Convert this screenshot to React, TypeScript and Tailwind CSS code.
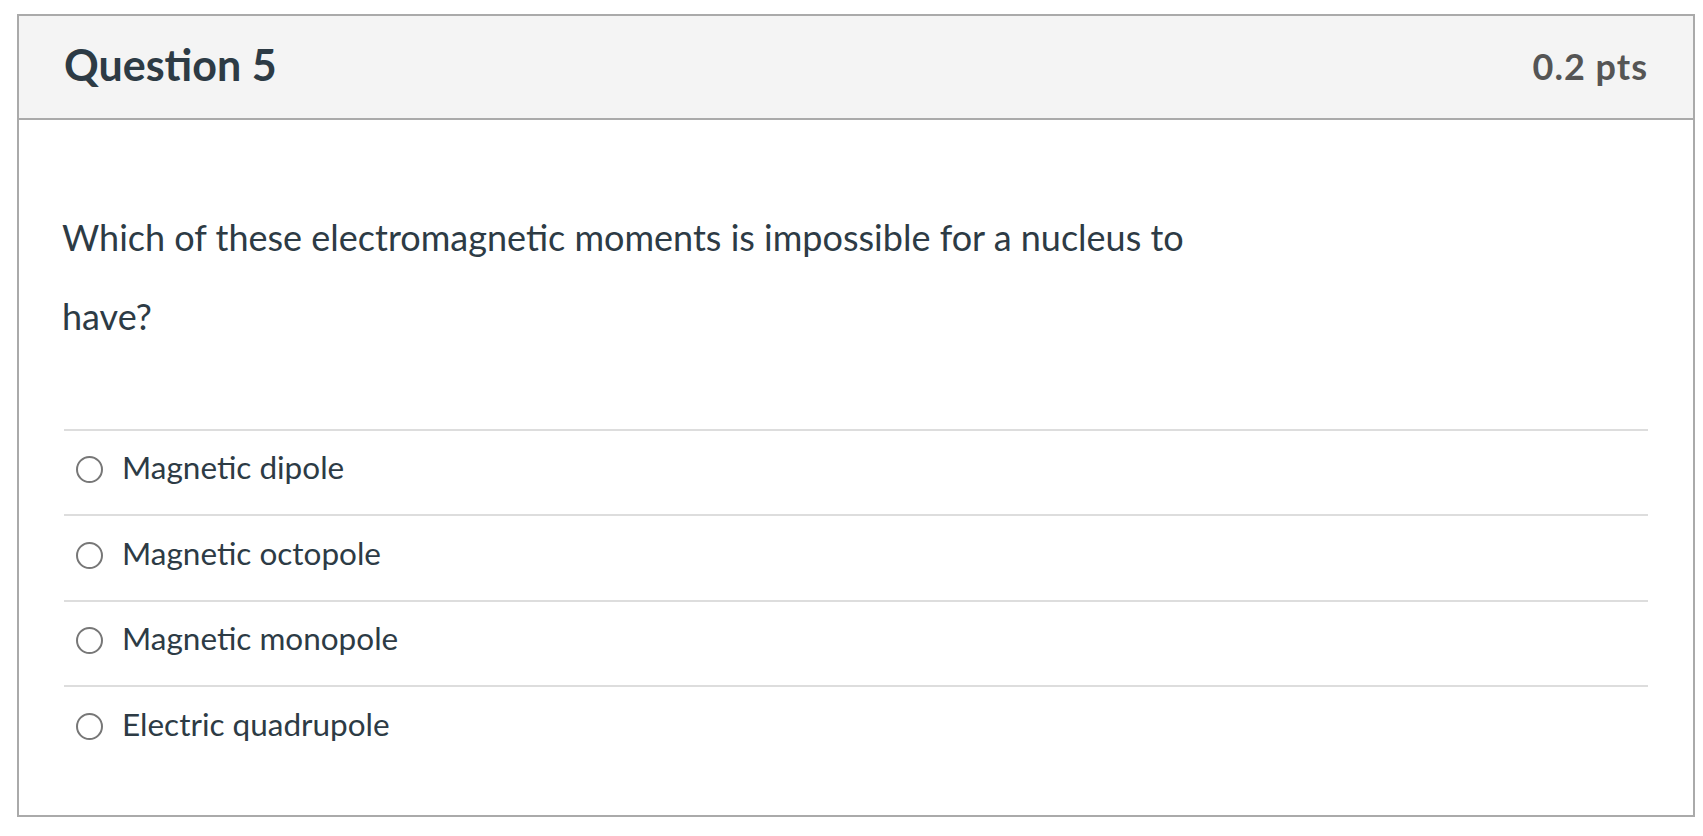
const ANSWERS = ['Magnetic dipole', 'Magnetic octopole', 'Magnetic monopole', 'Electric quadrupole']

export default function App() {
  return (
    <div className="min-h-screen bg-white pt-[14px] pl-[17px] pr-[8px] font-['Lato',_'Open_Sans',_sans-serif]">
      <div className="border-2 border-[#aaaaaa] bg-white">
        {/* header */}
        <div className="flex h-[104px] items-center justify-between border-b-2 border-[#aaaaaa] bg-[#f4f4f4] px-[45px] pb-[3px]">
          <h2 className="text-[43px] font-bold text-[#2d3b45]">Question 5</h2>
          <div className="text-[36px] font-bold tracking-[1px] text-[#555555]">0.2 pts</div>
        </div>

        {/* body */}
        <div className="px-[45px] pt-[78px] pb-[44px]">
          <p className="-ml-[2px] max-w-[1160px] text-[36px] leading-[79px] text-[#2d3b45]">
            Which of these electromagnetic moments is impossible for a nucleus to have?
          </p>
          <div className="mt-[72.5px]">
            {ANSWERS.map((a) => (
              <label key={a} className="flex h-[85.5px] items-start border-t-2 border-[#dddddd]">
                <span className="mt-[25.5px] ml-[12px] h-[27px] w-[27px] shrink-0 rounded-full border-2 border-[#777777]" />
                <span className="mt-[12.5px] ml-[19px] text-[31.5px] leading-[48px] text-[#2d3b45]">{a}</span>
              </label>
            ))}
          </div>
        </div>
      </div>
    </div>
  )
}
